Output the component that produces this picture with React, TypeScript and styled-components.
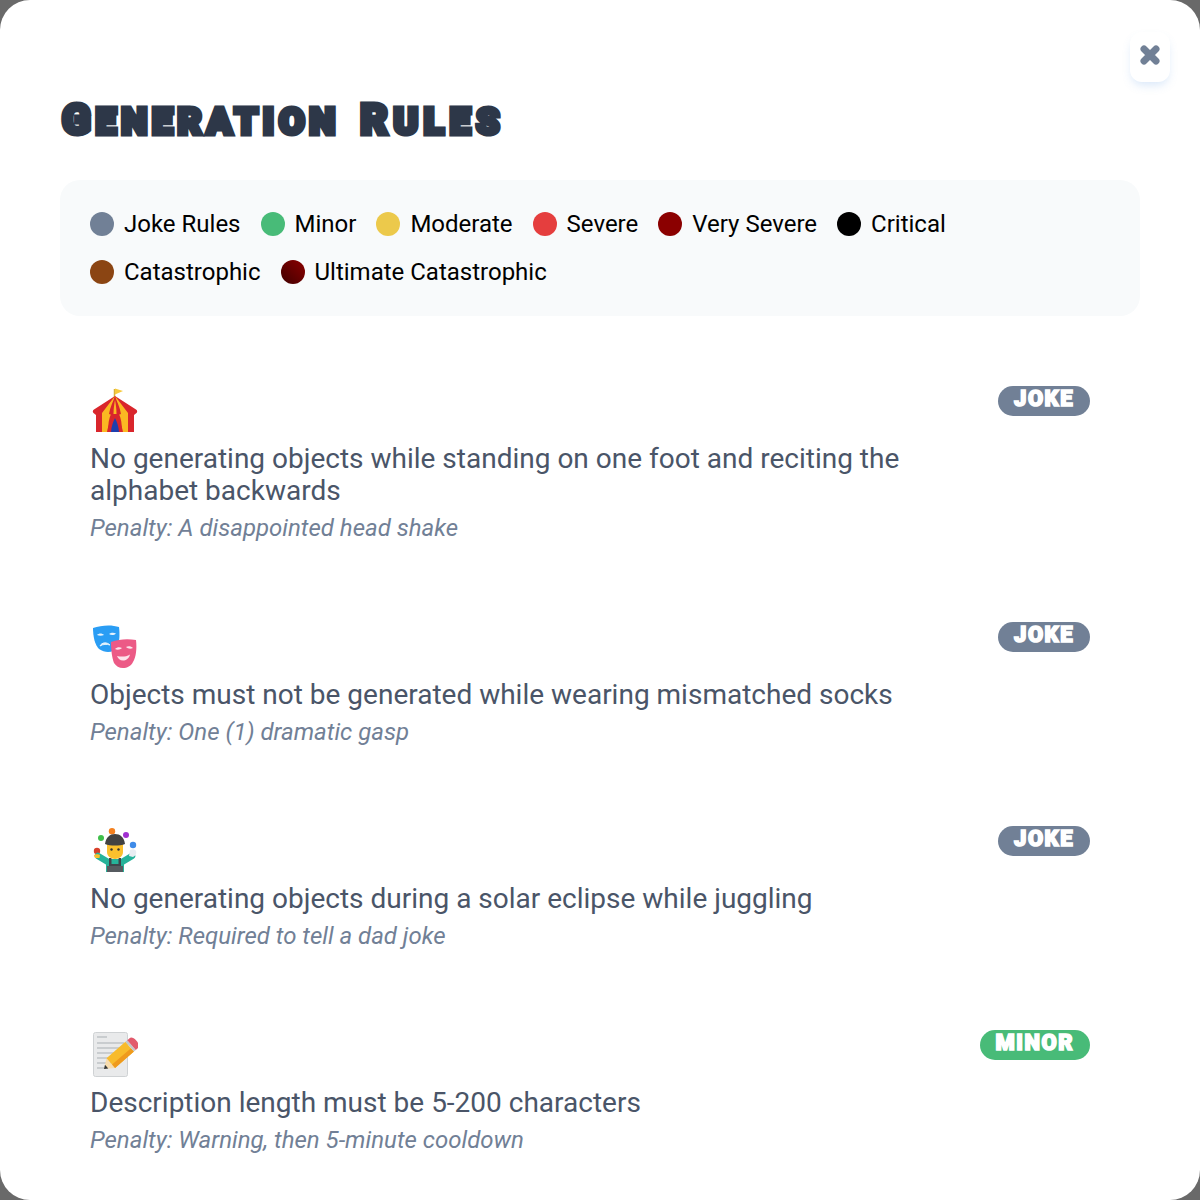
import React from 'react';
import styled, {createGlobalStyle} from "styled-components";

const GlobalStyle = createGlobalStyle`
html, body {
    margin: 0;
    padding: 0;
    height: 1200px;
    overflow: hidden;
    background: #696969;
}
* { box-sizing: border-box; }
`;

const Modal = styled.div`
position: relative;
width: 1200px;
height: 1200px;
padding: 60px;
background: #fff;
border-radius: 30px;
overflow: hidden;
font-family: Roboto, "Liberation Sans", sans-serif;`;

const CloseButton = styled.button`
position: absolute;
top: 32px;
right: 30px;
width: 40px;
height: 50px;
padding: 0 0 5px;
border: none;
border-radius: 12px;
background: #fff;
box-shadow: 0 5px 10px -2px rgba(100, 160, 230, 0.25);
display: flex;
align-items: center;
justify-content: center;
color: #718096;`;

const Title = styled.h2`
margin: 30px 0;
height: 60px;
line-height: 60px;
display: flex;
gap: 18px;
font-family: Roboto, sans-serif;
font-size: 37px;
font-weight: 900;
text-transform: uppercase;
color: #2d3748;
-webkit-text-stroke: 5px #2d3748;`;

const TitleWord = styled.span<{spacing: number}>`
display: block;
padding-left: 2px;
letter-spacing: ${(props) => props.spacing}px;
&::first-letter {
    font-size: 42px;
}`;

const Legend = styled.div`
display: flex;
flex-wrap: wrap;
gap: 20px;
padding: 30px;
margin-bottom: 40px;
background: #f8fafb;
border-radius: 20px;`;

const LegendItem = styled.div`
display: flex;
align-items: center;
gap: 10px;
height: 28px;
font-size: 24px;
line-height: 28px;
color: #000;`;

const Dot = styled.span<{color: string}>`
width: 24px;
height: 24px;
border-radius: 50%;
background: ${(props) => props.color};`;

const RuleList = styled.div`
display: flex;
flex-direction: column;
gap: 20px;`;

const Rule = styled.div`
display: flex;
align-items: flex-start;
justify-content: space-between;
padding: 30px 50px 30px 30px;`;

const RuleBody = styled.div`
width: 830px;`;

const RuleIcon = styled.div`
width: 48px;
height: 48px;
margin: 2px 0 7px;
display: flex;`;

const RuleText = styled.div`
font-size: 28px;
line-height: 32px;
color: #4a5568;`;

const Penalty = styled.div`
margin-top: 7px;
font-size: 24px;
line-height: 28px;
font-style: italic;
color: #718096;`;

const Badge = styled.span<{color: string}>`
height: 30px;
padding: 0 16px;
border-radius: 15px;
background: ${(props) => props.color};
color: #fff;
font-family: Roboto, sans-serif;
font-size: 22px;
font-weight: 900;
line-height: 26px;
letter-spacing: 1.5px;
-webkit-text-stroke: 1.6px #fff;`;

const CircusTent = () => (
    <svg viewBox="0 0 48 48" width="48" height="48">
        <path d="M24.500 9V1" stroke="#d9b13b" strokeWidth="1.500"/>
        <path d="M25 0.500l8 2.500-8 3.500z" fill="#f6c93c"/>
        <path d="M25 8L4 21.500c-1.500 1-1.500 2.500-.5 3.500L6 27v17h38V27l2.500-2c1-1 1-2.500-.5-3.500z" fill="#d9262c"/>
        <path d="M25 8L12 25v19h6c0-8 1-14 3-18zM25 8l13 17v19h-6c0-8-1-14-3-18z" fill="#fbb822"/>
        <path d="M25 8c-1.500 5-5 11-6 18l3 1 3-1 3 1 3-1c-1-7-4.500-13-6-18z" fill="#d9262c"/>
        <path d="M25 12c-.8 4-1.500 9-1.500 14h3c0-5-.7-10-1.500-14z" fill="#fbb822"/>
        <path d="M25 26c-2 5-7 10-8 18h16c-1-8-6-13-8-18z" fill="#d9262c"/>
        <path d="M25 30c-2 4-3.500 8-4 14h8c-.5-6-2-10-4-14z" fill="#1e3fae"/>
    </svg>
);

const TheaterMasks = () => (
    <svg viewBox="0 0 48 48" width="48" height="48">
        <path d="M3 4c8-3 19-3.500 26-1 1 8 .5 15-2 20-2 3-5 5-9 5-3 0-6-1-9-3C5 21 3 13 3 4z" fill="#2a9df4"/>
        <path d="M7 11c2-2 5-2 7 0-2 1-5 1-7 0zM19 10c2-1.500 5-1.500 7-.5-2 2-5 2-7 .5z" fill="#e3f2fd"/>
        <path d="M10 22c2-4 7-4 10-1-3-1-7-1-10 1z" fill="#e3f2fd" stroke="#e3f2fd"/>
        <path d="M21 18c8-3 17-3.500 25-2 1 9 0 17-3 22-2 4-6 6-10 6s-7-2-9-5c-2-5-3-13-3-21z" fill="#ec5a86"/>
        <path d="M25 25c2-2 5-2 7-1-2 2-5 2-7 1zM36 23c2-1 5-1 7 1-2 1-5 1-7-1z" fill="#fde4ec"/>
        <path d="M27 32c4 1 9 1 13-1.500-1 4-4 6-7 6s-5-2-6-4.500z" fill="#fde4ec"/>
    </svg>
);

const Juggler = () => (
    <svg viewBox="0 0 48 48" width="48" height="48">
        <circle cx="22" cy="3.200" r="3.200" fill="#f4801f"/>
        <circle cx="11" cy="10" r="3" fill="#3fbf4a"/>
        <circle cx="36" cy="7" r="3" fill="#a02fd0"/>
        <circle cx="7" cy="23" r="3.200" fill="#d8402a"/>
        <circle cx="43" cy="17" r="3.200" fill="#3f8be8"/>
        <path d="M8 28l10 6M42 28l-10 6" stroke="#26b39a" strokeWidth="6.500" strokeLinecap="round"/>
        <path d="M16 31h18v13H16z" fill="#26b39a"/>
        <path d="M19 30h2.500v6h7v-6H31v14H19z" fill="#3f464c"/>
        <rect x="17" y="38" width="16" height="6" fill="#565b60"/>
        <path d="M17 16h16v8c0 4-3.500 7-8 7s-8-3-8-7z" fill="#fbc02d"/>
        <path d="M15 16c1-7 5-10 10-10s9 3 10 10c-5 2-15 2-20 0z" fill="#424242"/>
        <circle cx="21.500" cy="21.500" r="1.200" fill="#333"/>
        <circle cx="28.500" cy="21.500" r="1.200" fill="#333"/>
        <path d="M40 22c2-1 5-1 6 1 1 3-1 5-3 6l-4-1z" fill="#e8edf2"/>
        <path d="M4 27c1-1 5-1 6 0l-.5 3H5z" fill="#fbc02d"/>
    </svg>
);

const MemoPencil = () => (
    <svg viewBox="0 0 48 48" width="48" height="48">
        <rect x="3.500" y="0.500" width="34" height="44" rx="2" fill="#e9eaeb" stroke="#cfd2d4"/>
        <path d="M7 5h10M7 11h27M7 16h27M7 21h27M7 26h22M7 31h14M7 36h8" stroke="#a9afb3" strokeWidth="1"/>
        <g transform="translate(14 37) rotate(-41)">
            <path d="M0 0l9-6.500V6.500z" fill="#f7dcae"/>
            <path d="M0 0l3.500-2.500v5z" fill="#2f3437"/>
            <rect x="9" y="-6.500" width="25" height="13" fill="#f8bb2c"/>
            <rect x="9" y="2" width="25" height="4.500" fill="#ef9a1d"/>
            <rect x="34" y="-6.500" width="2.500" height="13" fill="#c3c7ca"/>
            <path d="M36.500-6.500h3c2 0 3.500 2.500 3.500 6.500s-1.500 6.500-3.500 6.500h-3z" fill="#e25a6c"/>
        </g>
    </svg>
);

const CloseIcon = () => (
    <svg viewBox="0 0 20 20" width="20" height="20">
        <path d="M4 4l12 12M16 4L4 16" stroke="currentColor" strokeWidth="7" strokeLinecap="round"/>
    </svg>
);

const levels = [
    {label: 'Joke Rules', color: '#718096'},
    {label: 'Minor', color: '#48bb78'},
    {label: 'Moderate', color: '#ecc94b'},
    {label: 'Severe', color: '#e53e3e'},
    {label: 'Very Severe', color: '#8b0000'},
    {label: 'Critical', color: '#000000'},
    {label: 'Catastrophic', color: '#8b4513'},
    {label: 'Ultimate Catastrophic', color: 'linear-gradient(45deg, #400000, #8b0000)'},
];

const rules = [
    {
        icon: <CircusTent/>,
        text: 'No generating objects while standing on one foot and reciting the alphabet backwards',
        penalty: 'Penalty: A disappointed head shake',
        badge: 'JOKE',
        color: '#718096',
    },
    {
        icon: <TheaterMasks/>,
        text: 'Objects must not be generated while wearing mismatched socks',
        penalty: 'Penalty: One (1) dramatic gasp',
        badge: 'JOKE',
        color: '#718096',
    },
    {
        icon: <Juggler/>,
        text: 'No generating objects during a solar eclipse while juggling',
        penalty: 'Penalty: Required to tell a dad joke',
        badge: 'JOKE',
        color: '#718096',
    },
    {
        icon: <MemoPencil/>,
        text: 'Description length must be 5-200 characters',
        penalty: 'Penalty: Warning, then 5-minute cooldown',
        badge: 'MINOR',
        color: '#48bb78',
    },
];

const App = () => {
    return (
        <>
            <GlobalStyle/>
            <Modal>
                <CloseButton><CloseIcon/></CloseButton>
                <Title>
                    <TitleWord spacing={4.9}>Generation</TitleWord>
                    <TitleWord spacing={5.8}>Rules</TitleWord>
                </Title>
                <Legend>
                    {levels.map((level) => (
                        <LegendItem key={level.label}>
                            <Dot color={level.color}/>
                            {level.label}
                        </LegendItem>
                    ))}
                </Legend>
                <RuleList>
                    {rules.map((rule) => (
                        <Rule key={rule.text}>
                            <RuleBody>
                                <RuleIcon>{rule.icon}</RuleIcon>
                                <RuleText>{rule.text}</RuleText>
                                <Penalty>{rule.penalty}</Penalty>
                            </RuleBody>
                            <Badge color={rule.color}>{rule.badge}</Badge>
                        </Rule>
                    ))}
                </RuleList>
            </Modal>
        </>
    );
};

export default App;
